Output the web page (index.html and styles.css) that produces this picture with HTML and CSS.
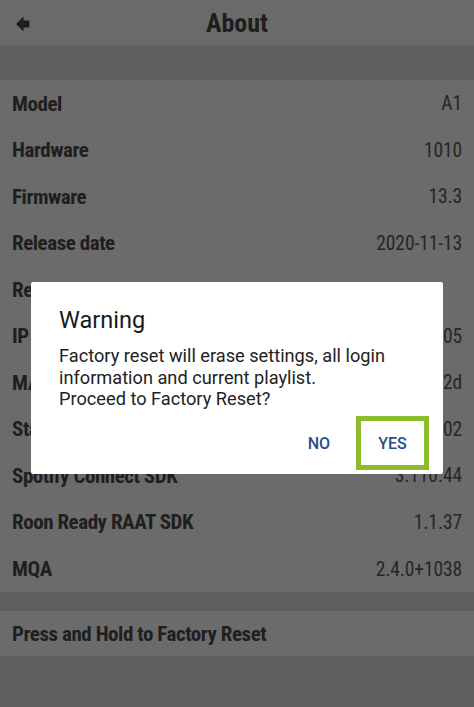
FILE: index.html
```html
<!DOCTYPE html>
<html>
<head>
<meta charset="utf-8">
<link rel="stylesheet" href="styles.css">
</head>
<body>
<div class="app">
  <header class="topbar">
    <svg class="back" viewBox="0 0 14 16" width="14" height="16"><path d="M0 8 L7.5 0.5 L7.5 4.5 L13.5 4.5 L13.5 11.5 L7.5 11.5 L7.5 15.5 Z" fill="#1e1e1e"/></svg>
    <h1 class="title">About</h1>
  </header>
  <div class="band"></div>
  <ul class="list">
    <li class="row"><span class="label">Model</span><span class="value">A1</span></li>
    <li class="row"><span class="label">Hardware</span><span class="value">1010</span></li>
    <li class="row"><span class="label">Firmware</span><span class="value">13.3</span></li>
    <li class="row"><span class="label">Release date</span><span class="value">2020-11-13</span></li>
    <li class="row"><span class="label">Reboot</span><span class="value"></span></li>
    <li class="row"><span class="label">IP</span><span class="value">105</span></li>
    <li class="row"><span class="label">MAC</span><span class="value">2d</span></li>
    <li class="row"><span class="label">Sta</span><span class="value">02</span></li>
    <li class="row"><span class="label">Spotify Connect SDK</span><span class="value">3.110.44</span></li>
    <li class="row"><span class="label">Roon Ready RAAT SDK</span><span class="value">1.1.37</span></li>
    <li class="row"><span class="label">MQA</span><span class="value">2.4.0+1038</span></li>
  </ul>
  <div class="band small"></div>
  <div class="row action"><span class="label">Press and Hold to Factory Reset</span></div>
</div>
<div class="scrim">
  <div class="dialog">
    <h2 class="dlg-title">Warning</h2>
    <p class="dlg-text">Factory reset will erase settings, all login information and current playlist.<br>Proceed to Factory Reset?</p>
    <div class="dlg-actions">
      <button class="btn">NO</button>
      <button class="btn btn-yes">YES</button>
    </div>
  </div>
</div>
</body>
</html>
```
FILE: styles.css
```css
html, body {
  margin: 0;
  padding: 0;
}
body {
  width: 474px;
  height: 707px;
  overflow: hidden;
  background: #5e5e5e;
  font-family: "Roboto Condensed", "Liberation Sans Narrow", "DejaVu Sans Condensed", "Liberation Sans", sans-serif;
  font-stretch: condensed;
}
.app {
  display: flex;
  flex-direction: column;
}
.topbar {
  height: 45px;
  background: #6a6a6a;
  display: flex;
  align-items: center;
  justify-content: center;
  position: relative;
  box-shadow: 0 1px 0 #646464;
}
.back {
  position: absolute;
  left: 16px;
  top: 15.5px;
}
.title {
  margin: 0;
  font-size: 26px;
  font-weight: 700;
  color: #1e1e1e;
}
.band {
  height: 35px;
  background: #5e5e5e;
}
.band.small {
  height: 19px;
}
.list {
  list-style: none;
  margin: 0;
  padding: 0;
  background: #6b6b6b;
}
.row {
  height: 45.5px;
  border-bottom: 1px solid #707070;
  display: flex;
  align-items: center;
  justify-content: space-between;
  padding: 0 12px;
  background: #6b6b6b;
}
.list .row:last-child {
  border-bottom: 0;
  height: 46.5px;
}
.label {
  font-size: 21px;
  font-weight: 700;
  letter-spacing: -0.45px;
  color: #1f1f1f;
  padding-top: 2px;
}
.value {
  font-size: 19.5px;
  font-weight: 400;
  letter-spacing: -0.1px;
  color: #262626;
  padding-top: 2px;
}
.row.action {
  height: 45px;
  border-bottom: 0;
}
.scrim {
  position: fixed;
  inset: 0;
  display: block;
}
.dialog {
  position: absolute;
  left: 31px;
  top: 282px;
  width: 412px;
  height: 192px;
  box-sizing: border-box;
  background: #ffffff;
  padding: 24px 0 0 28px;
  font-family: Roboto, "Noto Sans", sans-serif;
  font-stretch: normal;
  border-radius: 2px;
}
.dlg-title {
  margin: 0;
  font-size: 23.5px;
  font-weight: 400;
  color: #1a1a1a;
  line-height: 28px;
}
.dlg-text {
  margin: 11px 0 0 0;
  width: 360px;
  font-size: 18.2px;
  line-height: 21.5px;
  color: #222222;
}
.dlg-actions {
  position: absolute;
  right: 14px;
  bottom: 4px;
  display: flex;
  align-items: center;
  gap: 26px;
}
.btn {
  background: none;
  border: 0;
  padding: 0;
  font-family: Roboto, "Noto Sans", sans-serif;
  font-size: 16px;
  font-weight: 500;
  color: #1f4f8b;
}
.btn-yes {
  width: 73px;
  height: 54px;
  box-sizing: border-box;
  border: 5px solid #8cbb2d;
  background: #ffffff;
}
```
